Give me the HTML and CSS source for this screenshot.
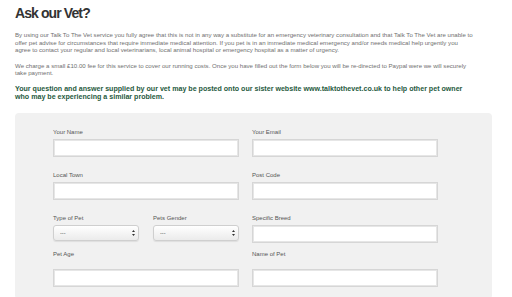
FILE: index.html
```html
<!DOCTYPE html>
<html lang="en">
<head>
    <meta charset="UTF-8">
    <meta name="viewport" content="width=device-width, initial-scale=1.0">
    <title>Ask our Vet?</title>
    <link rel="stylesheet" href="styles.css">
</head>
<body>
    <div class="page">
        <h1>Ask our Vet?</h1>
        <p class="intro">By using our Talk To The Vet service you fully agree that this is not in any way a substitute for an emergency veterinary consultation and that Talk To The Vet are unable to<br>offer pet advise for circumstances that require immediate medical attention. If you pet is in an immediate medical emergency and/or needs medical help urgently you<br>agree to contact your regular and local veterinarians, local animal hospital or emergency hospital as a matter of urgency.</p>
        <p class="intro">We charge a small &pound;10.00 fee for this service to cover our running costs. Once you have filled out the form below you will be re-directed to Paypal were we will securely<br>take payment.</p>
        <p class="notice">Your question and answer supplied by our vet may be posted onto our sister website www.talktothevet.co.uk to help other pet owner<br>who may be experiencing a similar problem.</p>

        <form class="panel">
            <div class="field">
                <label for="name">Your Name</label>
                <input type="text" id="name">
            </div>
            <div class="field">
                <label for="email">Your Email</label>
                <input type="text" id="email">
            </div>

            <div class="field">
                <label for="town">Local Town</label>
                <input type="text" id="town">
            </div>
            <div class="field">
                <label for="postcode">Post Code</label>
                <input type="text" id="postcode">
            </div>

            <div class="field pair">
                <div>
                    <label for="type">Type of Pet</label>
                    <div class="select-wrap">
                        <select id="type"><option>---</option></select>
                        <svg class="arrows" width="3" height="6" viewBox="0 0 3 6"><path d="M1.5 0 L3 2 L0 2 Z M0 4 L3 4 L1.5 6 Z" fill="#333"/></svg>
                    </div>
                </div>
                <div>
                    <label for="gender">Pets Gender</label>
                    <div class="select-wrap">
                        <select id="gender"><option>---</option></select>
                        <svg class="arrows" width="3" height="6" viewBox="0 0 3 6"><path d="M1.5 0 L3 2 L0 2 Z M0 4 L3 4 L1.5 6 Z" fill="#333"/></svg>
                    </div>
                </div>
            </div>
            <div class="field">
                <label for="breed">Specific Breed</label>
                <input type="text" id="breed">
            </div>

            <div class="field last">
                <label for="age">Pet Age</label>
                <input type="text" id="age">
            </div>
            <div class="field last">
                <label for="petname">Name of Pet</label>
                <input type="text" id="petname">
            </div>
        </form>
    </div>
</body>
</html>
```

FILE: styles.css
```css
body {
    margin: 0;
    font-family: 'Liberation Sans', Arial, sans-serif;
    background: #ffffff;
    color: #666666;
}

.page {
    padding: 4px 20px 0 15px;
}

h1 {
    margin: 0 0 9px 0;
    font-size: 14px;
    line-height: 18px;
    color: #333333;
    letter-spacing: -0.9px;
}

.intro {
    margin: 0 0 8px 0;
    font-size: 6.1px;
    line-height: 7.6px;
    color: #707070;
    white-space: nowrap;
}

.notice {
    margin: 9px 0 0 0;
    font-size: 7.1px;
    line-height: 7.8px;
    font-weight: bold;
    color: #1f5a40;
    white-space: nowrap;
}

.panel {
    margin-top: 11px;
    background: #f1f1f1;
    border-radius: 4px;
    padding: 15px 0 12px 38px;
    display: grid;
    grid-template-columns: 186px 186px;
    column-gap: 13px;
    row-gap: 14px;
}

label {
    display: block;
    font-size: 6px;
    line-height: 8px;
    color: #555555;
    margin-bottom: 3px;
}

input[type="text"] {
    display: block;
    width: 186px;
    height: 18px;
    margin: 0;
    padding: 0 4px;
    border: 1px solid #d6d6d6;
    box-shadow: inset 0 0 0 1px #e6e6e6;
    background: #ffffff;
    box-sizing: border-box;
}

.pair {
    display: flex;
    gap: 14px;
}

.select-wrap {
    position: relative;
}

select {
    display: block;
    width: 86px;
    height: 16px;
    margin: 0;
    padding: 0 6px;
    appearance: none;
    -webkit-appearance: none;
    border: 1px solid #cfcfcf;
    border-radius: 3px;
    background: linear-gradient(#ffffff, #ebebeb);
    box-shadow: 0 1px 1px rgba(0, 0, 0, 0.08);
    font-family: 'Liberation Sans', Arial, sans-serif;
    font-size: 5.5px;
    color: #444444;
}

.arrows {
    position: absolute;
    right: 4px;
    top: 5px;
}

.last label {
    margin-top: -7px;
    margin-bottom: 11px;
}
```
